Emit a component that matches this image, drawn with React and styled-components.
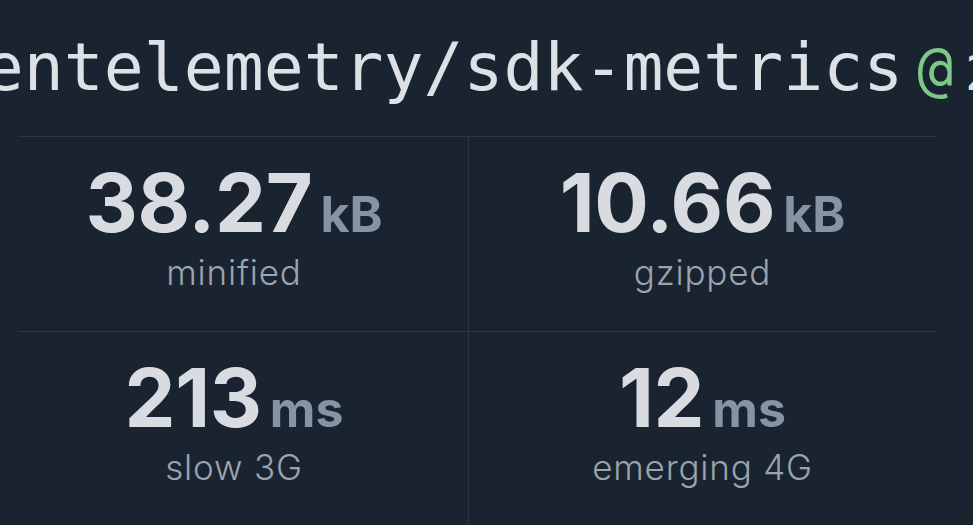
import React from 'react';
import styled, { createGlobalStyle } from 'styled-components';

const GlobalStyle = createGlobalStyle`
  html, body {
    margin: 0;
    padding: 0;
    background: #1a2330;
    overflow: hidden;
  }
  body {
    font-family: Inter, "Noto Sans", sans-serif;
  }
`;

const Page = styled.div`
  width: 973px;
  height: 525px;
  background: #1a2330;
  overflow: hidden;
`;

const Header = styled.div`
  box-sizing: border-box;
  height: 136px;
  padding-top: 34px;
  display: flex;
  justify-content: center;
  overflow: visible;
`;

const Title = styled.h1`
  margin: 0;
  flex: none;
  white-space: nowrap;
  font-family: "DejaVu Sans Mono", "Liberation Mono", monospace;
  font-weight: 400;
  font-size: 66.4px;
  line-height: 1;
  color: #dde1e6;
  display: flex;
  align-items: baseline;
`;

const At = styled.span`
  color: #7cc987;
  margin: 0 12px 0 14px;
  font-size: 0.9em;
`;

const Version = styled.span`
  color: #dde1e6;
  font-size: 0.72em;
`;

const Stats = styled.div`
  width: 936px;
`;

const Rule = styled.div`
  height: 1px;
  margin-left: 18px;
  background: #2c3746;
`;

const Row = styled.div`
  display: grid;
  grid-template-columns: 468px 468px;
  height: 194px;
`;

const Cell = styled.div`
  box-sizing: border-box;
  display: flex;
  flex-direction: column;
  align-items: center;
  padding-top: 26px;
  border-left: ${p => (p.divided ? '1px solid #2c3746' : 'none')};
`;

const Value = styled.div`
  display: flex;
  align-items: baseline;
  line-height: 1;
`;

const Number = styled.span`
  font-size: 81px;
  font-weight: 700;
  color: #d8dce1;
  letter-spacing: -0.3px;
`;

const Unit = styled.span`
  font-size: 50px;
  font-weight: 700;
  color: #8693a5;
  margin-left: 8px;
`;

const Label = styled.div`
  margin-top: 7px;
  font-size: 35px;
  font-weight: 300;
  line-height: 1.2;
  letter-spacing: 0.8px;
  color: #9aa3ae;
`;

const rows = [
  [
    { value: '38.27', unit: 'kB', label: 'minified' },
    { value: '10.66', unit: 'kB', label: 'gzipped' },
  ],
  [
    { value: '213', unit: 'ms', label: 'slow 3G' },
    { value: '12', unit: 'ms', label: 'emerging 4G' },
  ],
];

export default function App() {
  return (
    <Page>
      <GlobalStyle />
      <Header>
        <Title>
          <span>@opentelemetry/sdk-metrics</span>
          <At>@</At>
          <Version>2.0.1</Version>
        </Title>
      </Header>
      <Stats>
        {rows.map((row, i) => (
          <React.Fragment key={i}>
            <Rule />
            <Row>
              {row.map((s, j) => (
                <Cell key={s.label} divided={j === 1}>
                  <Value>
                    <Number>{s.value}</Number>
                    <Unit>{s.unit}</Unit>
                  </Value>
                  <Label>{s.label}</Label>
                </Cell>
              ))}
            </Row>
          </React.Fragment>
        ))}
      </Stats>
    </Page>
  );
}
